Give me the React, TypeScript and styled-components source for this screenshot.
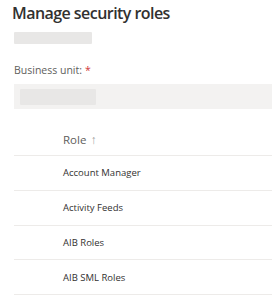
import React from "react";
import styled, { createGlobalStyle } from "styled-components";

const GlobalStyle = createGlobalStyle`
  body {
    margin: 0;
    background: #fff;
    font-family: "Open Sans", "Noto Sans", sans-serif;
    color: #323130;
  }
`;

const Panel = styled.div`
  width: 272px;
  height: 300px;
  overflow: hidden;
  padding-left: 12px;
  box-sizing: border-box;
`;

const Title = styled.h1`
  margin: 0;
  padding-top: 2px;
  font-size: 16px;
  line-height: 22px;
  font-weight: 600;
  color: #323130;
  white-space: nowrap;
  letter-spacing: -0.55px;
`;

const Blur = styled.div<{ $w: number; $h: number }>`
  width: ${(p) => p.$w}px;
  height: ${(p) => p.$h}px;
  background: #e8e7e6;
  border-radius: 1px;
`;

const UserBlock = styled.div`
  padding: 8px 0 0 2px;
  height: 32px;
`;

const Label = styled.label`
  display: block;
  padding-left: 2px;
  font-size: 10.5px;
  line-height: 13px;
  color: #605e5c;
  font-weight: 400;
  margin-bottom: 7px;
`;

const Required = styled.span`
  color: #d13438;
  margin-left: 3px;
`;

const Field = styled.div`
  margin-left: 2px;
  height: 25px;
  background: #f3f2f1;
  display: flex;
  align-items: center;
  padding-left: 6px;
`;

const Grid = styled.div`
  margin-top: 14px;
  margin-left: 2px;
`;

const HeaderRow = styled.div`
  height: 32px;
  display: flex;
  align-items: center;
  padding-left: 49px;
  border-bottom: 1px solid #edebe9;
  font-size: 11.5px;
  color: #605e5c;
  font-weight: 400;
`;

const Arrow = styled.span`
  margin-left: 4px;
  color: #a19f9d;
  font-size: 12px;
`;

const Row = styled.div`
  height: 33.8px;
  display: flex;
  align-items: center;
  padding-left: 49px;
  border-bottom: 1px solid #edebe9;
  font-size: 9.5px;
  color: #323130;
  white-space: nowrap;
`;

const roles = ["Account Manager", "Activity Feeds", "AIB Roles", "AIB SML Roles"];

export default function App() {
  return (
    <Panel>
      <GlobalStyle />
      <Title>Manage security roles</Title>
      <UserBlock>
        <Blur $w={78} $h={12} />
      </UserBlock>
      <Label>
        Business unit:<Required>*</Required>
      </Label>
      <Field>
        <Blur $w={76} $h={16} />
      </Field>
      <Grid>
        <HeaderRow>
          Role<Arrow>↑</Arrow>
        </HeaderRow>
        {roles.map((r) => (
          <Row key={r}>{r}</Row>
        ))}
      </Grid>
    </Panel>
  );
}
